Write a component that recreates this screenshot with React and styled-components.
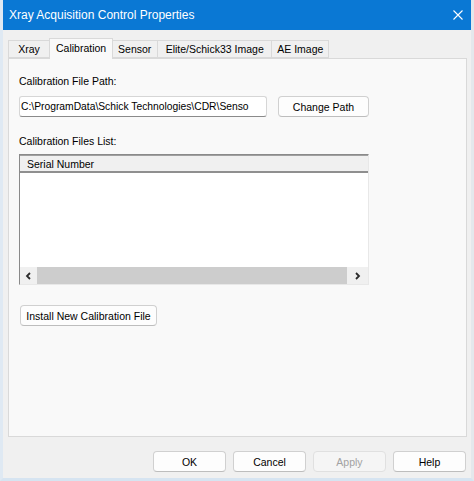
import styled, { createGlobalStyle } from "styled-components"

const Global = createGlobalStyle`
	html, body {
		margin: 0;
		padding: 0;
		background: #f0f0f0;
	}
	body {
		font-family: "Liberation Sans", Arial, sans-serif;
		font-size: 10.5px;
		color: #000;
	}
`

const Window = styled.div`
	width: 474px;
	height: 481px;
	box-sizing: border-box;
	display: flex;
	flex-direction: column;
	background: #f0f0f0;
	border-left: 3px solid #dfe9f3;
	border-right: 3px solid #e4e8ec;
	border-bottom: 3px solid #d6e4f1;
	overflow: hidden;
`

const TitleBar = styled.div`
	height: 30px;
	flex: none;
	margin: 0 -3px;
	display: flex;
	align-items: center;
	justify-content: space-between;
	padding: 0 11px 0 9px;
	background: #0a78d4;
	color: #fff;
	font-size: 12px;
`

const Close = styled.div`
	width: 10px;
	height: 10px;
	display: flex;
`

const Body = styled.div`
	flex: 1;
	display: flex;
	flex-direction: column;
	padding: 8px 4px 0 5px;
`

const Tabs = styled.div`
	display: flex;
	align-items: flex-end;
	height: 20px;
	position: relative;
	z-index: 1;
`

const Tab = styled.div`
	height: ${p => (p.$active ? "21px" : "18px")};
	box-sizing: border-box;
	padding: 0 ${p => (p.$active ? "6px" : "5px")};
	margin: ${p => (p.$active ? "0 -1px -1px" : "0")};
	display: flex;
	align-items: center;
	justify-content: center;
	min-width: ${p => p.$w}px;
	background: ${p => (p.$active ? "#f9f9f9" : "#f0f0f0")};
	border: 1px solid #d9d9d9;
	border-bottom: ${p => (p.$active ? "none" : "1px solid #d9d9d9")};
	border-left-width: ${p => (p.$first || p.$active ? "1px" : "0")};
	padding-bottom: ${p => (p.$active ? "3px" : "0")};
	position: relative;
	z-index: ${p => (p.$active ? 2 : 1)};
`

const Panel = styled.div`
	height: 379px;
	box-sizing: border-box;
	background: #f9f9f9;
	border: 1px solid #d9d9d9;
	padding: 16px 0 0 10px;
	display: flex;
	flex-direction: column;
	align-items: flex-start;
`

const Label = styled.div`
	line-height: 12px;
	height: 12px;
	margin-bottom: ${p => p.$mb}px;
`

const PathRow = styled.div`
	display: flex;
	align-items: center;
	gap: 11px;
	margin-bottom: 18px;
`

const Input = styled.div`
	width: 248px;
	height: 21px;
	box-sizing: border-box;
	background: #fff;
	border: 1px solid #d6d6d6;
	border-bottom-color: #8a8a8a;
	border-radius: 3px;
	padding: 0 1px;
	display: flex;
	align-items: center;
	white-space: nowrap;
	overflow: hidden;
	font-size: 10.3px;
`

const Button = styled.div`
	width: ${p => p.$w}px;
	height: 21px;
	box-sizing: border-box;
	display: flex;
	align-items: center;
	justify-content: center;
	background: ${p => (p.$disabled ? "#f5f5f5" : "#fdfdfd")};
	color: ${p => (p.$disabled ? "#a2a2a2" : "#000")};
	border: 1px solid ${p => (p.$disabled ? "#e0e0e0" : "#d0d0d0")};
	border-bottom-color: ${p => (p.$disabled ? "#e0e0e0" : "#bdbdbd")};
	border-radius: 4px;
	margin-top: ${p => p.$mt || 0}px;
	margin-left: ${p => p.$ml || 0}px;
`

const List = styled.div`
	width: 350px;
	height: 131px;
	box-sizing: border-box;
	background: #fff;
	border-top: 1px solid #8a8a8a;
	border-left: 1px solid #8a8a8a;
	border-right: 1px solid #e8e8e8;
	border-bottom: 1px solid #e8e8e8;
	display: flex;
	flex-direction: column;
`

const Header = styled.div`
	height: 18px;
	box-sizing: border-box;
	background: #f0f0f0;
	border-top: 1px solid #a0a0a0;
	border-bottom: 2px solid #8f8f8f;
	padding-left: 7px;
	display: flex;
	align-items: center;
`

const ListBody = styled.div`
	flex: 1;
`

const Scrollbar = styled.div`
	height: 17px;
	display: flex;
	background: #f0f0f0;
`

const Arrow = styled.div`
	width: ${p => p.$w}px;
	display: flex;
	align-items: center;
	justify-content: center;
`

const Track = styled.div`
	flex: 1;
	background: #cdcdcd;
`

const Footer = styled.div`
	flex: 1;
	display: flex;
	justify-content: flex-end;
	align-items: flex-start;
	gap: 7px;
	padding: 14px 1px 0 0;
`

const Chevron = ({ dir }) => (
	<svg width="7" height="8" viewBox="0 0 7 8">
		<path
			d={dir === "left" ? "M5 1L2 4L5 7" : "M2 1L5 4L2 7"}
			stroke="#2b2b2b"
			strokeWidth="1.8"
			fill="none"
		/>
	</svg>
)

export default function App() {
	return (
		<>
			<Global />
			<Window>
				<TitleBar>
					<span>Xray Acquisition Control Properties</span>
					<Close>
						<svg width="10" height="10" viewBox="0 0 10 10">
							<path d="M0.5 0.5L9.5 9.5M9.5 0.5L0.5 9.5" stroke="#fff" strokeWidth="1.1" />
						</svg>
					</Close>
				</TitleBar>
				<Body>
					<Tabs>
						<Tab $first $w={42}>Xray</Tab>
						<Tab $active $w={63}>Calibration</Tab>
						<Tab $w={46}>Sensor</Tab>
						<Tab $w={114}>Elite/Schick33 Image</Tab>
						<Tab $w={54}>AE Image</Tab>
					</Tabs>
					<Panel>
						<Label $mb={9}>Calibration File Path:</Label>
						<PathRow>
							<Input>C:\ProgramData\Schick Technologies\CDR\Senso</Input>
							<Button $w={91}>Change Path</Button>
						</PathRow>
						<Label $mb={7}>Calibration Files List:</Label>
						<List>
							<Header>Serial Number</Header>
							<ListBody />
							<Scrollbar>
								<Arrow $w={17}><Chevron dir="left" /></Arrow>
								<Track />
								<Arrow $w={21}><Chevron dir="right" /></Arrow>
							</Scrollbar>
						</List>
						<Button $w={137} $mt={20} $ml={1}>Install New Calibration File</Button>
					</Panel>
					<Footer>
						<Button $w={73}>OK</Button>
						<Button $w={73}>Cancel</Button>
						<Button $w={73} $disabled>Apply</Button>
						<Button $w={73}>Help</Button>
					</Footer>
				</Body>
			</Window>
		</>
	)
}
